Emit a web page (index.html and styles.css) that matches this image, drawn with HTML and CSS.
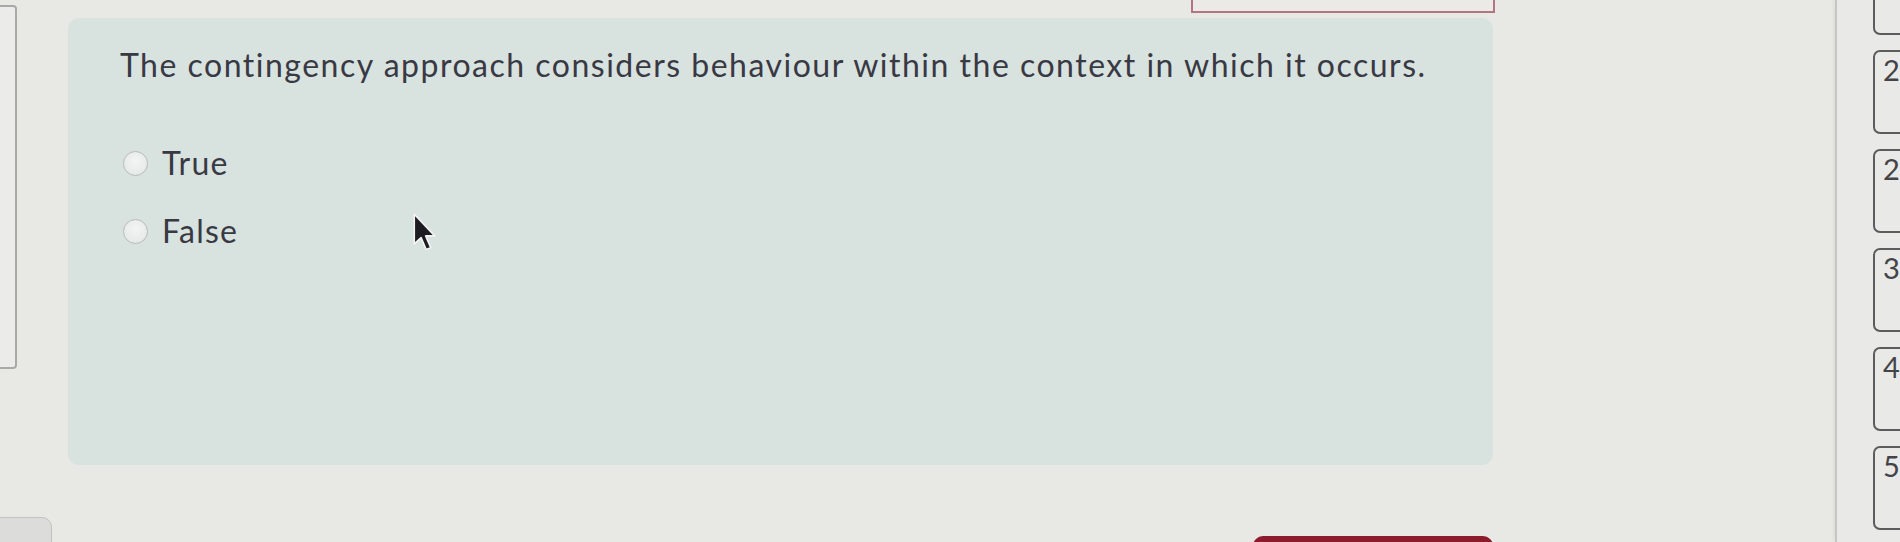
FILE: index.html
```html
<!DOCTYPE html>
<html lang="en">
<head>
<meta charset="utf-8">
<title>Question</title>
<link rel="stylesheet" href="styles.css">
</head>
<body>
<div class="screen">
  <div class="left-col">
    <div class="strip"></div>
    <div class="tab"></div>
  </div>
  <main class="main">
    <div class="top-box"></div>
    <section class="card">
      <p class="question">The contingency approach considers behaviour within the context in which it occurs.</p>
      <label class="option"><span class="radio"></span><span class="opt-text">True</span></label>
      <label class="option"><span class="radio"></span><span class="opt-text">False</span></label>
    </section>
    <div class="red-button"></div>
  </main>
  <div class="filler"></div>
  <aside class="sidebar">
    <div class="nums">
      <div class="num"></div>
      <div class="num">2</div>
      <div class="num">2</div>
      <div class="num">3</div>
      <div class="num">4</div>
      <div class="num">5</div>
    </div>
  </aside>
  <svg class="cursor" width="25" height="39" viewBox="0 0 22 34" aria-hidden="true">
    <path d="M2 1 L2 27 L8 21.5 L12.5 32 L16.5 30.3 L12 20 L20 20 Z" fill="#1c1c22" stroke="#f4f4f4" stroke-width="1.4" stroke-linejoin="round"/>
  </svg>
</div>
</body>
</html>
```

FILE: styles.css
```css
* { box-sizing: border-box; }
html, body { margin: 0; padding: 0; }
body {
  background: #e8e9e5;
  font-family: "Lato", "Liberation Sans", sans-serif;
}
.screen {
  position: relative;
  display: flex;
  width: 1900px;
  height: 542px;
  overflow: hidden;
  background: #e8e9e5;
}
.left-col {
  width: 60px;
  flex: none;
  display: flex;
  flex-direction: column;
}
.strip {
  flex: none;
  margin-top: 5px;
  margin-left: -10px;
  width: 27px;
  height: 364px;
  background: #ebecea;
  border: 2px solid #a9aaa8;
  border-radius: 4px;
}
.tab {
  flex: none;
  margin-top: auto;
  margin-left: -10px;
  margin-bottom: -16px;
  width: 62px;
  height: 41px;
  background: #dcdddb;
  border: 1.5px solid #c2c3c1;
  border-radius: 10px;
}
.main {
  width: 1425px;
  margin-left: 8px;
  flex: none;
  display: flex;
  flex-direction: column;
}
.main > * { flex: none; }
.top-box {
  align-self: flex-end;
  margin-right: -2px;
  width: 304px;
  height: 13px;
  border: 2px solid #b27683;
  border-top: none;
  background: #ebeae7;
}
.card {
  margin-top: 5px;
  height: 447px;
  background: #d8e2df;
  border-radius: 11px;
  padding: 28px 0 0 52px;
  color: #393944;
}
.question {
  margin: 0 0 60px 0;
  font-size: 32px;
  line-height: 38px;
  letter-spacing: 1.5px;
  white-space: nowrap;
}
.option {
  display: flex;
  align-items: center;
  height: 38px;
  margin: 0 0 30px 3px;
  font-size: 32px;
  line-height: 38px;
  letter-spacing: 1.2px;
}
.radio {
  width: 25px;
  height: 25px;
  border-radius: 50%;
  border: 1.5px solid #b8bcbb;
  background: radial-gradient(circle at 50% 40%, #f3f5f4 0%, #e6eae9 70%, #dde2e1 100%);
  margin-right: 14px;
  flex: none;
}
.opt-text { display: block; }
.red-button {
  align-self: flex-end;
  margin-top: 71px;
  width: 240px;
  height: 30px;
  background: #8c1b2b;
  border-radius: 10px 10px 0 0;
}
.filler { flex: 1; }
.sidebar {
  width: 65px;
  flex: none;
  border-left: 2px solid #c6c7c4;
  box-shadow: -2px 0 3px rgba(0,0,0,0.04);
  padding-left: 36px;
  background: #e9eae7;
}
.nums {
  margin-top: -49px;
  display: flex;
  flex-direction: column;
  gap: 15px;
}
.num {
  flex: none;
  width: 60px;
  height: 84px;
  border: 2px solid #5c5c5e;
  border-radius: 7px;
  padding: 2px 0 0 8px;
  font-size: 29px;
  line-height: 32px;
  color: #434348;
  background: #e9eae7;
}
.cursor {
  position: absolute;
  left: 412px;
  top: 213px;
}
```
